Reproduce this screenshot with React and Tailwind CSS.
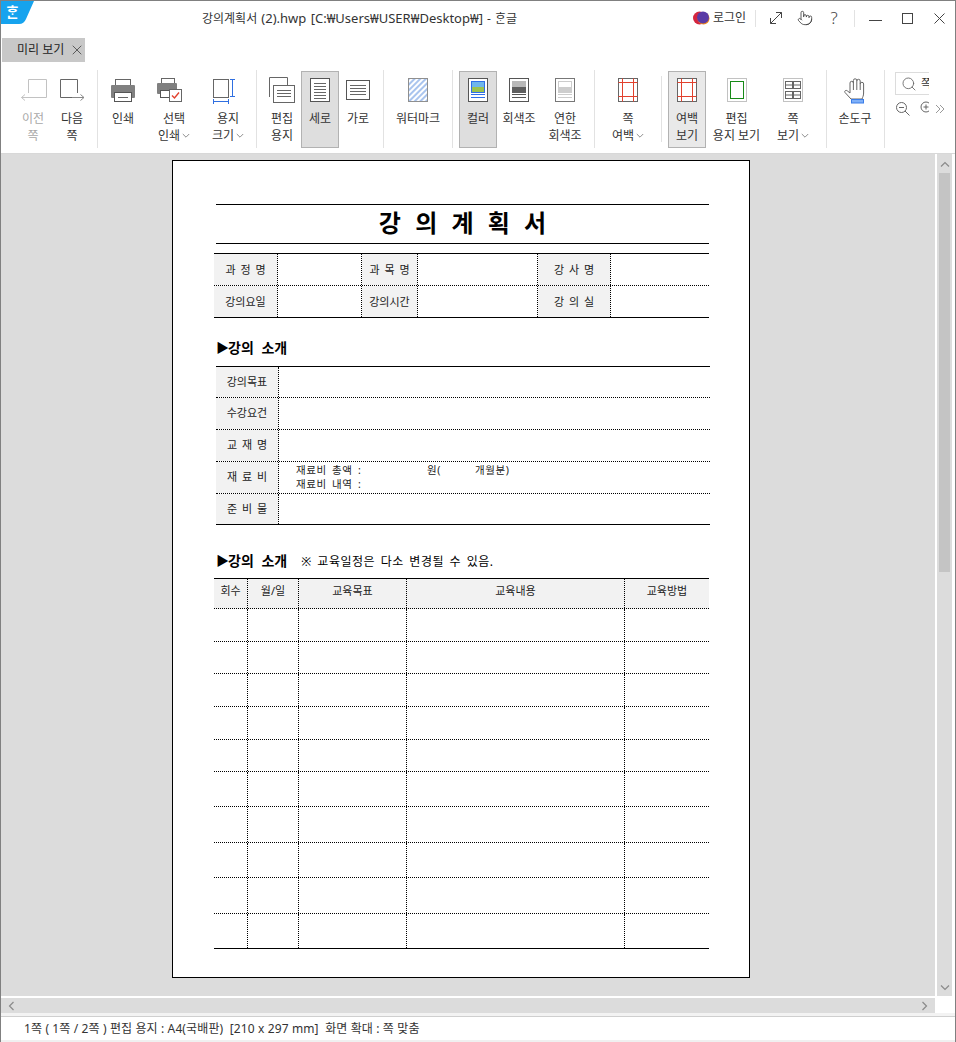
import { Pointer, Search, X } from "lucide-react";

const Chevron = ({ className = "" }) => (
  <svg width="10" height="6" viewBox="0 0 10 6" className={className}>
    <path d="M1 .5 5 4.5 9 .5" fill="none" stroke="#8a8a8a" strokeWidth="1.2" />
  </svg>
);

const Icon = ({ children }) => (
  <svg width="38" height="30" viewBox="0 0 38 30" className="shrink-0">
    {children}
  </svg>
);

const Lines = ({ x1, x2, ys, color = "#666" }) =>
  ys.map((y) => <path key={y} d={`M${x1} ${y}H${x2}`} stroke={color} fill="none" />);

const PrevIcon = () => (
  <Icon>
    <path d="M14.5 17V3.5H32.5V21.5H24" fill="none" stroke="#c2c2c2" />
    <path d="M7.5 21.5H24M11 18.5 7.5 21.5 11 24.5" fill="none" stroke="#c2c2c2" />
  </Icon>
);

const NextIcon = () => (
  <Icon>
    <path d="M7.5 3.5H24.5V17M7.5 3.5V21.5H19" fill="none" stroke="#666" />
    <path d="M19 21.5H31M27.5 18.5 31 21.5 27.5 24.5" fill="none" stroke="#888" />
  </Icon>
);

const PrintIcon = () => (
  <Icon>
    <rect x="11.5" y="3.5" width="15" height="8" fill="#fff" stroke="#666" />
    <rect x="7" y="9" width="24" height="13" rx="1" fill="#808080" />
    <rect x="10.5" y="16.5" width="17" height="9" fill="#fff" stroke="#555" />
    <path d="M14 21.5H24" stroke="#666" />
  </Icon>
);

const SelectPrintIcon = () => (
  <Icon>
    <rect x="6.5" y="2.5" width="13" height="6" fill="#fff" stroke="#666" />
    <rect x="2" y="7" width="20" height="11" rx="1" fill="#808080" />
    <rect x="5.5" y="14.5" width="14" height="7" fill="#fff" stroke="#555" />
    <rect x="14.5" y="13.5" width="12" height="12" fill="#fff" stroke="#666" />
    <path d="M17 19.5 19.5 22 24 16.5" fill="none" stroke="#e2412d" strokeWidth="1.4" />
  </Icon>
);

const PaperSizeIcon = () => (
  <Icon>
    <rect x="4.5" y="3.5" width="15" height="18" fill="#fff" stroke="#666" />
    <path d="M23.5 3V21M21 3.5H26M21 20.5H26" stroke="#2f6fe0" fill="none" />
    <path d="M4 25.5H20M4.5 23V28M19.5 23V28" stroke="#2f6fe0" fill="none" />
  </Icon>
);

const EditPaperIcon = () => (
  <Icon>
    <path d="M6.5 21V1.5H24.5V9" fill="none" stroke="#666" />
    <rect x="10.5" y="9.5" width="21" height="17" fill="#fff" stroke="#666" />
    <Lines x1={14} x2={28} ys={[14.5, 17.5, 20.5]} />
  </Icon>
);

const PortraitIcon = () => (
  <Icon>
    <rect x="9.5" y="2.5" width="19" height="23" fill="#fff" stroke="#555" />
    <Lines x1={13} x2={25} ys={[7.5, 10.5, 13.5, 16.5, 19.5, 22.5]} />
  </Icon>
);

const LandscapeIcon = () => (
  <Icon>
    <rect x="7.5" y="4.5" width="23" height="19" fill="#fff" stroke="#555" />
    <Lines x1={11} x2={27} ys={[9.5, 12.5, 15.5, 18.5]} />
  </Icon>
);

const WatermarkIcon = () => (
  <Icon>
    <defs>
      <pattern id="hatch" width="4" height="4" patternUnits="userSpaceOnUse" patternTransform="rotate(45)">
        <rect width="2" height="4" fill="#a9c4ee" />
      </pattern>
    </defs>
    <rect x="9.5" y="2.5" width="19" height="23" fill="url(#hatch)" stroke="#8f8f8f" />
  </Icon>
);

const ColorIcon = () => (
  <Icon>
    <rect x="9.5" y="2.5" width="19" height="23" fill="#fff" stroke="#555" />
    <rect x="12.5" y="5.5" width="13" height="11" fill="#6fb6ea" stroke="#2f6fe8" />
    <rect x="13" y="11" width="12" height="5" fill="#9cc34f" />
    <Lines x1={12} x2={26} ys={[18.5, 21.5]} color="#2f6fe8" />
  </Icon>
);

const GrayIcon = () => (
  <Icon>
    <rect x="9.5" y="2.5" width="19" height="23" fill="#fff" stroke="#555" />
    <rect x="12" y="5" width="14" height="6" fill="#b8b8b8" />
    <rect x="12" y="11" width="14" height="6" fill="#5e5e5e" />
    <Lines x1={12} x2={26} ys={[18.5, 21.5]} color="#555" />
  </Icon>
);

const LightGrayIcon = () => (
  <Icon>
    <rect x="9.5" y="2.5" width="19" height="23" fill="#fff" stroke="#777" />
    <rect x="12.5" y="5.5" width="13" height="11" fill="#fff" stroke="#ccc" />
    <rect x="12" y="11" width="14" height="6" fill="#cdcdcd" />
    <Lines x1={12} x2={26} ys={[18.5, 21.5]} color="#ccc" />
  </Icon>
);

const MarginIcon = () => (
  <Icon>
    <rect x="9.5" y="2.5" width="19" height="23" fill="#fff" stroke="#666" />
    <path d="M13.5 2.5V25.5M24.5 2.5V25.5M9.5 6.5H28.5M9.5 20.5H28.5" stroke="#e2412d" fill="none" />
  </Icon>
);

const EditPaperViewIcon = () => (
  <Icon>
    <rect x="9.5" y="2.5" width="19" height="23" fill="#fff" stroke="#c2c2c2" />
    <rect x="12.5" y="5.5" width="13" height="17" fill="#fff" stroke="#178a17" />
  </Icon>
);

const PageViewIcon = () => (
  <Icon>
    <rect x="9.5" y="2.5" width="19" height="23" fill="#fff" stroke="#c2c2c2" />
    {[11.5, 19.5].map((x) =>
      [5.5, 15.5].map((y) => (
        <g key={`${x}-${y}`}>
          <rect x={x} y={y} width="7" height="7" fill="#fff" stroke="#666" />
          <path d={`M${x} ${y + 3.5}H${x + 7}`} stroke="#666" />
        </g>
      )),
    )}
  </Icon>
);

const HandIcon = () => (
  <Icon>
    <path
      d="M15 23 9 16.5c-1-1.5 1-3 2.5-1.5L14 17V7a1.7 1.7 0 0 1 3.4 0V4.5a1.7 1.7 0 0 1 3.4 0V5a1.7 1.7 0 0 1 3.4 0v3a1.7 1.7 0 0 1 3.4 0v9c0 3-1 4-1.5 6Z"
      fill="#fff"
      stroke="#666"
    />
    <path d="M17.4 7v7M20.8 5v9M24.2 8v6" stroke="#666" fill="none" />
    <rect x="15.5" y="23.5" width="12" height="3.5" fill="#7fb0f8" stroke="#3b7de8" />
  </Icon>
);

const Sep = ({ className }) => <div className={`w-px bg-[#e2e2e2] ${className}`} />;

const RibbonBtn = ({ icon, lines, arrow, active, muted, className = "" }) => (
  <div
    className={`mt-px flex h-[77px] shrink-0 flex-col items-center border pt-1 ${
      active === "dark"
        ? "border-[#b2b2b2] bg-[#dedede]"
        : active === "light"
          ? "border-[#b2b2b2] bg-[#e9e9e9]"
          : "border-transparent"
    } ${className}`}
  >
    {icon}
    <div className={`mt-[4px] text-center text-[12px] leading-[17px] whitespace-nowrap ${muted ? "text-[#a8a8a8]" : "text-[#333]"}`}>
      {lines.map((l, i) => (
        <div key={l} className="flex items-center justify-center">
          {l}
          {arrow && i === lines.length - 1 && <Chevron className="ml-[2px] w-[8px]" />}
        </div>
      ))}
    </div>
  </div>
);

const Ribbon = () => (
  <div className="flex h-[90px] border-b border-[#d8d8d8] pl-[13px] pt-[6px]">
    <div className="flex h-[78px] items-start">
      <RibbonBtn icon={<PrevIcon />} lines={["이전", "쪽"]} muted className="w-[38px]" />
      <RibbonBtn icon={<NextIcon />} lines={["다음", "쪽"]} className="ml-px w-[38px]" />
      <Sep className="ml-[6px] h-[78px]" />
      <RibbonBtn icon={<PrintIcon />} lines={["인쇄"]} className="ml-[6px] w-[38px]" />
      <RibbonBtn icon={<SelectPrintIcon />} lines={["선택", "인쇄"]} arrow className="ml-[10px] w-[44px]" />
      <RibbonBtn icon={<PaperSizeIcon />} lines={["용지", "크기"]} arrow className="ml-[10px] w-[44px]" />
      <Sep className="ml-[6px] h-[78px]" />
      <RibbonBtn icon={<EditPaperIcon />} lines={["편집", "용지"]} className="ml-[6px] w-[38px]" />
      <RibbonBtn icon={<PortraitIcon />} lines={["세로"]} active="dark" className="w-[38px]" />
      <RibbonBtn icon={<LandscapeIcon />} lines={["가로"]} className="w-[38px]" />
      <Sep className="ml-[6px] h-[78px]" />
      <RibbonBtn icon={<WatermarkIcon />} lines={["워터마크"]} className="ml-[6px] w-[56px]" />
      <Sep className="ml-[6px] h-[78px]" />
      <RibbonBtn icon={<ColorIcon />} lines={["컬러"]} active="dark" className="ml-[6px] w-[38px]" />
      <RibbonBtn icon={<GrayIcon />} lines={["회색조"]} className="w-[44px]" />
      <RibbonBtn icon={<LightGrayIcon />} lines={["연한", "회색조"]} className="ml-[2px] w-[44px]" />
      <Sep className="ml-[7px] h-[78px]" />
      <RibbonBtn icon={<MarginIcon />} lines={["쪽", "여백"]} arrow className="ml-[11px] w-[44px]" />
      <Sep className="ml-[11px] mt-[6px] h-[66px]" />
      <RibbonBtn icon={<MarginIcon />} lines={["여백", "보기"]} active="light" className="ml-[6px] w-[38px]" />
      <RibbonBtn icon={<EditPaperViewIcon />} lines={["편집", "용지 보기"]} className="ml-px w-[59px]" />
      <RibbonBtn icon={<PageViewIcon />} lines={["쪽", "보기"]} arrow className="ml-[5px] w-[44px]" />
      <Sep className="ml-[11px] h-[78px]" />
      <RibbonBtn icon={<HandIcon />} lines={["손도구"]} className="ml-[8px] w-[40px]" />
      <Sep className="ml-[9px] h-[78px]" />
      <div className="ml-[10px] w-[34px] overflow-hidden pt-[2px]">
        <div className="flex h-[23px] w-[50px] items-center border border-[#dcdcdc] pl-[5px] text-[12px] text-[#333]">
          <Search size={16} strokeWidth={1.3} color="#666" />
          <span className="ml-[4px]">쪽</span>
        </div>
        <div className="mt-[6px] flex w-[50px] items-center">
          <svg width="16" height="16" viewBox="0 0 16 16" className="shrink-0">
            <circle cx="6.5" cy="6.5" r="5" fill="none" stroke="#666" />
            <path d="M4 6.5H9M10 10l4.5 4.5" stroke="#666" fill="none" />
          </svg>
          <svg width="16" height="16" viewBox="0 0 16 16" className="ml-[7px] shrink-0">
            <circle cx="8" cy="6" r="5" fill="none" stroke="#666" />
            <path d="M5.5 6H10.5M8 3.5V8.5" stroke="#666" fill="none" />
          </svg>
        </div>
      </div>
      <svg width="10" height="10" viewBox="0 0 10 10" className="ml-[6px] mt-[34px] shrink-0">
        <path d="M1 1 5 5 1 9M5 1 9 5 5 9" fill="none" stroke="#999" />
      </svg>
    </div>
  </div>
);

const TitleBar = () => (
  <div className="flex h-[35px] items-start">
    <div className="relative h-[23px] w-[33px] shrink-0">
      <svg width="33" height="23" viewBox="0 0 33 23" className="absolute inset-0">
        <path d="M0 0H33L25 18Q23 23 18 23H0Z" fill="#16a3ee" />
      </svg>
      <span className="absolute left-[5px] top-px text-[14px] leading-[20px] font-bold text-white">ᄒᆞᆫ</span>
    </div>
    <div className="ml-[168px] mt-[8px] text-[12px] leading-[18px] whitespace-nowrap text-[#333] [word-spacing:1px]">
      강의계획서 <span className="text-[13px]">(2).hwp [C:₩Users₩USER₩Desktop₩]</span> - ᄒᆞᆫ글
    </div>
    <div className="ml-auto mt-[8px] flex h-[18px] items-center pr-[10px] text-[#444]">
      <svg width="17" height="14" viewBox="0 0 17 14" className="shrink-0">
        <circle cx="6.5" cy="7" r="6.5" fill="#d5263f" />
        <circle cx="10.5" cy="7.5" r="6" fill="#f08a1d" />
        <circle cx="10" cy="6.5" r="6" fill="#5a3aa5" />
      </svg>
      <span className="ml-[3px] text-[12px] text-[#333]">로그인</span>
      <div className="ml-[9px] h-[17px] w-px bg-[#e2e2e2]" />
      <svg width="12" height="12" viewBox="0 0 12 12" className="ml-[14px] shrink-0">
        <path d="M.5 11.5 11.5.5M6 .5H11.5V6M.5 6V11.5H6" fill="none" stroke="#444" />
      </svg>
      <Pointer size={16} strokeWidth={1.3} className="ml-[15px]" />
      <span className="ml-[15px] w-[12px] text-center text-[17px] font-light text-[#444]">?</span>
      <div className="ml-[14px] h-[17px] w-px bg-[#e2e2e2]" />
      <div className="ml-[14px] mt-[5px] h-px w-[13px] bg-[#444]" />
      <div className="ml-[20px] h-[11px] w-[11px] border border-[#444]" />
      <svg width="11" height="11" viewBox="0 0 11 11" className="ml-[21px] shrink-0">
        <path d="M.5.5 10.5 10.5M10.5.5.5 10.5" fill="none" stroke="#444" />
      </svg>
    </div>
  </div>
);

const Label = ({ children, className = "" }) => (
  <div className={`flex shrink-0 items-center justify-center border-r border-dotted border-black bg-[#f2f2f2] text-[11px] text-[#222] [word-spacing:2px] ${className}`}>
    {children}
  </div>
);

const Cell = ({ className = "" }) => <div className={`shrink-0 border-r border-dotted border-black ${className}`} />;

const InfoTable = () => (
  <div className="mt-[9px] w-[495px] border-y border-black">
    <div className="flex h-[32px] border-b border-dotted border-black">
      <Label className="w-[64px] pt-[2px]">과 정 명</Label>
      <Cell className="w-[84px]" />
      <Label className="w-[56px] pt-[2px]">과 목 명</Label>
      <Cell className="w-[120px]" />
      <Label className="w-[73px] pt-[2px]">강 사 명</Label>
    </div>
    <div className="flex h-[31px]">
      <Label className="w-[64px] pt-[2px]">강의요일</Label>
      <Cell className="w-[84px]" />
      <Label className="w-[56px] pt-[2px]">강의시간</Label>
      <Cell className="w-[120px]" />
      <Label className="w-[73px] pt-[2px]">강 의 실</Label>
    </div>
  </div>
);

const IntroRow = ({ label, className, children }) => (
  <div className={`flex ${className}`}>
    <Label className="w-[63px]">{label}</Label>
    {children}
  </div>
);

const IntroTable = () => (
  <div className="ml-[2px] w-[494px] border-y border-black">
    <IntroRow label="강의목표" className="h-[31px] border-b border-dotted border-black" />
    <IntroRow label="수강요건" className="h-[32px] border-b border-dotted border-black" />
    <IntroRow label="교 재 명" className="h-[32px] border-b border-dotted border-black" />
    <IntroRow label="재 료 비" className="h-[32px] border-b border-dotted border-black">
      <div className="ml-[17px] flex flex-col justify-center pb-[2px] text-[10.5px] leading-[14px] tracking-[0.6px] text-[#222] [word-spacing:2px]">
        <div className="flex">
          <span className="w-[131px]">재료비 총액 :</span>
          <span className="w-[48px]">원(</span>
          <span>개월분)</span>
        </div>
        <div>재료비 내역 :</div>
      </div>
    </IntroRow>
    <IntroRow label="준 비 물" className="h-[30px]" />
  </div>
);

const Heading = ({ className, children }) => (
  <div className={`flex items-center text-[14px] font-bold text-black ${className}`}>
    <span className="w-[12px] text-[13px] leading-none">▶</span>
    <span className="[word-spacing:4px]">강의 소개</span>
    {children}
  </div>
);

const columns = ["w-[34px]", "w-[51px]", "w-[108px]", "w-[218px]"];
const headers = ["회수", "월/일", "교육목표", "교육내용"];
const rowHeights = [
  "h-[33px]", "h-[32px]", "h-[33px]", "h-[33px]", "h-[32px]",
  "h-[35px]", "h-[36px]", "h-[35px]", "h-[36px]",
];

const ScheduleTable = () => (
  <div className="w-[495px] border-y border-black">
    <div className="flex h-[30px] border-b border-dotted border-black bg-[#f2f2f2]">
      {headers.map((h, i) => (
        <Label key={h} className={`pb-[4px] ${columns[i]}`}>{h}</Label>
      ))}
      <div className="flex flex-1 items-center justify-center pb-[4px] text-[11px] text-[#222]">교육방법</div>
    </div>
    {rowHeights.map((h, r) => (
      <div key={r} className={`flex border-b border-dotted border-black ${h}`}>
        {columns.map((c) => <Cell key={c} className={c} />)}
      </div>
    ))}
    <div className="flex h-[34px]">
      {columns.map((c) => <Cell key={c} className={c} />)}
    </div>
  </div>
);

const Page = () => (
  <div className="h-[818px] w-[578px] border border-black bg-white pl-[41px] pt-[43px]">
    <div className="ml-[2px] flex h-[40px] w-[493px] items-center justify-center border-y border-black pb-[3px] text-[24px] font-bold text-black [word-spacing:8px]">
      강 의 계 획 서
    </div>
    <InfoTable />
    <Heading className="h-[48px] pt-[11px] pl-[2px]" />
    <IntroTable />
    <Heading className="h-[53px] pt-[18px] pl-[2px]">
      <span className="ml-[14px] mt-[2px] text-[12px] font-normal tracking-[0.5px] [word-spacing:2px]">※ 교육일정은 다소 변경될 수 있음.</span>
    </Heading>
    <ScheduleTable />
  </div>
);

export default function App() {
  return (
    <div className="flex h-[1042px] w-[956px] flex-col overflow-hidden border-x border-t border-[#808080] bg-white font-['Noto_Sans','Noto_Sans_CJK_KR',sans-serif]">
      <TitleBar />
      <div className="ml-px flex h-[28px] items-start pt-[2px]">
        <div className="flex h-[24px] w-[83px] items-center bg-[#c8c8c8] pl-[15px] text-[12px] whitespace-nowrap text-[#222]">
          미리 보기
          <X size={16} strokeWidth={1.1} className="ml-[5px] shrink-0 text-[#333]" />
        </div>
      </div>
      <Ribbon />
      <div className="flex h-[842px]">
        <div className="w-[934px] bg-[#dcdcdc] pl-[171px] pt-[6px]">
          <Page />
        </div>
        <div className="ml-[2px] flex w-[15px] flex-col items-center bg-[#dcdcdc]">
          <div className="flex h-[19px] items-center">
            <Chevron className="rotate-180" />
          </div>
          <div className="h-[399px] w-[11px] bg-[#c4c4c4]" />
          <div className="mt-auto flex h-[16px] items-center">
            <Chevron />
          </div>
        </div>
      </div>
      <div className="mt-[2px] flex h-[15px]">
        <div className="flex w-[934px] items-center justify-between bg-[#dcdcdc] px-[5px]">
          <Chevron className="rotate-90" />
          <Chevron className="-rotate-90" />
        </div>
      </div>
      <div className="h-[3px] bg-[#f3f3f3]" />
      <div className="flex h-[24px] items-center border-t border-[#cfcfcf] pl-[23px] text-[12px] tracking-[0.12px] whitespace-pre text-[#333]">
        1쪽 ( 1쪽 / 2쪽 ) 편집 용지 : A4(국배판)  [210 x 297 mm]  화면 확대 : 쪽 맞춤
      </div>
      <div className="flex-1 bg-[#f0f0f0]" />
    </div>
  );
}
